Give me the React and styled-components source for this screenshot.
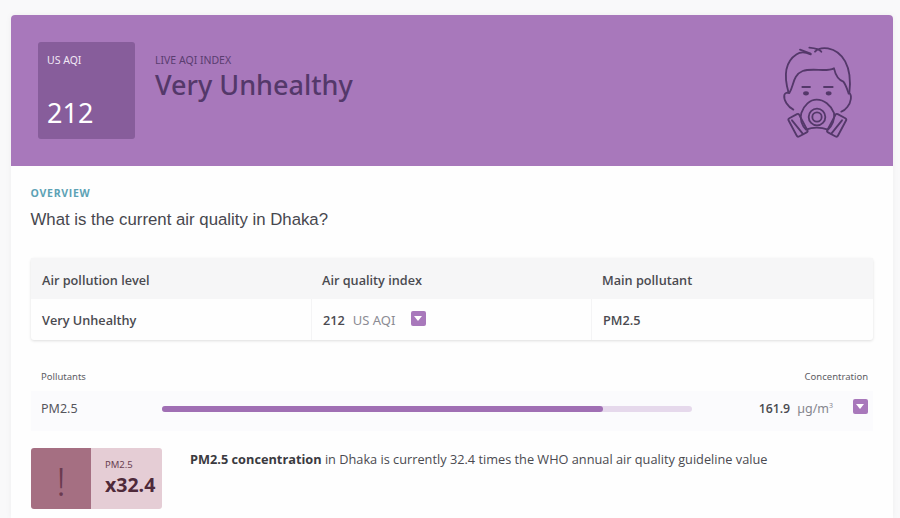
import React from "react";
import styled, { createGlobalStyle } from "styled-components";

const GlobalStyle = createGlobalStyle`
  html, body {
    margin: 0;
    background: #f9f9fa;
  }
  body {
    font-family: "Open Sans", "Noto Sans", sans-serif;
    color: #3f3f46;
  }
`;

const columns = [
  { title: "Air pollution level" },
  { title: "Air quality index" },
  { title: "Main pollutant" },
];

const MaskIcon = () => (
  <svg width="110" height="120" viewBox="0 0 330 360" fill="none" stroke="#54386a" strokeWidth="5.5" strokeLinecap="round" strokeLinejoin="round">
    <path d="M100 236C84 228 70 208 73 192C75 186 80 184 86 186C70 132 76 92 110 70C118 64 134 62 152 70" />
    <path d="M120 56L152 68M148 50C168 52 180 56 184 62M165 62C174 52 190 50 204 52C246 60 278 104 268 186C276 192 274 214 262 228C256 236 250 240 244 242" />
    <path d="M88 186C102 164 98 132 128 120C156 110 200 124 222 112C226 130 234 146 250 152C258 162 262 176 266 188" />
    <path d="M127 168H150M192 168H218" />
    <ellipse cx="138" cy="187" rx="6" ry="3.5" fill="#54386a" />
    <ellipse cx="206" cy="187" rx="6" ry="3.5" fill="#54386a" />
    <path d="M124 246C132 222 150 206 170 206C192 206 212 222 222 246C226 264 216 284 204 296C182 288 158 288 138 296C126 284 118 264 124 246Z" />
    <circle cx="171" cy="258" r="25" />
    <circle cx="171" cy="258" r="14" />
    <rect x="96" y="252" width="36" height="62" rx="5" transform="rotate(-28 114 283)" />
    <rect x="212" y="252" width="36" height="62" rx="5" transform="rotate(28 230 283)" />
    <path d="M96 268L128 308M246 268L214 308" />
  </svg>
);

const App = () => {
  return (
    <>
      <GlobalStyle />
      <Card>
        <Header>
          <ScoreTile>
            <ScoreLabel>US AQI</ScoreLabel>
            <ScoreValue>212</ScoreValue>
          </ScoreTile>
          <Status>
            <StatusLabel>LIVE AQI INDEX</StatusLabel>
            <StatusTitle>Very Unhealthy</StatusTitle>
          </Status>
          <MaskIcon />
        </Header>
        <Content>
          <Eyebrow>OVERVIEW</Eyebrow>
          <Question>What is the current air quality in Dhaka?</Question>
          <Table>
            {columns.map((c) => (
              <HeadCell key={c.title}>{c.title}</HeadCell>
            ))}
            <Cell>Very Unhealthy</Cell>
            <Cell>
              212 <Unit>US AQI</Unit>
              <DropButton />
            </Cell>
            <Cell>PM2.5</Cell>
          </Table>
          <PollutantHead>
            <span>Pollutants</span>
            <span>Concentration</span>
          </PollutantHead>
          <PollutantRow>
            <PollutantName>PM2.5</PollutantName>
            <Track>
              <Fill style={{ width: "83.2%" }} />
            </Track>
            <Amount>
              161.9
              <AmountUnit>
                µg/m<sup>3</sup>
              </AmountUnit>
            </Amount>
            <RowButton />
          </PollutantRow>
          <Advice>
            <Badge>
              <BadgeIcon>!</BadgeIcon>
              <BadgeBody>
                <BadgeLabel>PM2.5</BadgeLabel>
                <BadgeValue>x32.4</BadgeValue>
              </BadgeBody>
            </Badge>
            <AdviceText>
              <strong>PM2.5 concentration</strong> in Dhaka is currently 32.4 times the WHO annual air quality guideline value
            </AdviceText>
          </Advice>
        </Content>
      </Card>
    </>
  );
};

export default App;

const Card = styled.div`
  margin: 15px 7px 0 11px;
  height: 503px;
  overflow: hidden;
  background: #fefefe;
  border-radius: 4px 4px 0 0;
  box-shadow: 0 0 6px rgba(0, 0, 0, 0.05);
`;

const Header = styled.header`
  display: flex;
  align-items: center;
  height: 151px;
  padding: 0 23px 0 27px;
  box-sizing: border-box;
  background: #a878bb;
`;

const ScoreTile = styled.div`
  display: flex;
  flex-direction: column;
  justify-content: space-between;
  width: 97px;
  height: 97px;
  padding: 11px 9px 8px;
  box-sizing: border-box;
  background: #875d9b;
  border-radius: 3px;
  color: #fff;
`;

const ScoreLabel = styled.div`
  font-family: "Noto Sans", sans-serif;
  font-size: 10.5px;
  line-height: 14px;
  color: #f2e8f6;
`;

const ScoreValue = styled.div`
  font-family: "Noto Sans", sans-serif;
  font-size: 27px;
  line-height: 36px;
`;

const Status = styled.div`
  flex: 1;
  align-self: flex-start;
  padding: 38px 0 0 20px;
`;

const StatusLabel = styled.div`
  font-family: "Noto Sans", sans-serif;
  font-size: 10.5px;
  line-height: 14px;
  color: #5a3d70;
`;

const StatusTitle = styled.div`
  font-family: "Noto Sans", sans-serif;
  font-size: 27px;
  font-weight: 500;
  line-height: 36px;
  color: #54386a;
`;

const Content = styled.div`
  padding: 20px 20px 0;
`;

const Eyebrow = styled.div`
  margin-left: -0.5px;
  font-size: 10.5px;
  font-weight: 700;
  line-height: 14px;
  letter-spacing: 0.7px;
  color: #5da2b5;
`;

const Question = styled.h2`
  margin: 9px 0 0 -0.5px;
  font-family: "Liberation Sans", sans-serif;
  font-size: 16.8px;
  font-weight: 400;
  line-height: 22px;
  color: #47474e;
`;

const Table = styled.div`
  display: grid;
  grid-template-columns: 280px 280px 1fr;
  margin-top: 27px;
  border-radius: 3px;
  box-shadow: 0 1px 3px rgba(0, 0, 0, 0.13);
  font-size: 12.7px;
`;

const HeadCell = styled.div`
  display: flex;
  align-items: center;
  box-sizing: border-box;
  height: 41px;
  padding: 2px 0 0 11px;
  background: #f6f6f7;
  font-weight: 600;
  color: #4a4a50;
`;

const Cell = styled.div`
  display: flex;
  align-items: center;
  box-sizing: border-box;
  height: 41px;
  padding-left: 11px;
  font-weight: 600;
  color: #4a4a50;
  & + & {
    border-left: 1px solid #f4f4f5;
  }
`;

const Unit = styled.span`
  margin: 0 16px 0 8px;
  font-family: "Noto Sans", sans-serif;
  font-size: 13px;
  font-weight: 400;
  color: #8b8b93;
`;

const DropButton = styled.span`
  position: relative;
  flex: none;
  display: block;
  width: 15px;
  height: 15px;
  margin-top: -2px;
  background: #a878bb;
  border-radius: 2px;
  &::after {
    content: "";
    position: absolute;
    left: 3px;
    top: 5px;
    border-style: solid;
    border-width: 5px 4.5px 0;
    border-color: #fff transparent transparent;
  }
`;

const RowButton = styled(DropButton)`
  margin-top: -4px;
`;

const PollutantHead = styled.div`
  display: flex;
  justify-content: space-between;
  margin-top: 30px;
  padding: 0 5px 0 10px;
  font-family: "Noto Sans", sans-serif;
  font-size: 9.5px;
  line-height: 14px;
  color: #5d5d64;
`;

const PollutantRow = styled.div`
  display: flex;
  align-items: center;
  box-sizing: border-box;
  height: 40px;
  margin-top: 7px;
  padding: 0 5px 6px 10px;
  background: #fbfbfd;
`;

const PollutantName = styled.div`
  width: 121px;
  font-family: "Noto Sans", sans-serif;
  font-size: 12.5px;
  color: #55555c;
`;

const Track = styled.div`
  width: 530px;
  height: 6px;
  margin-top: 2px;
  background: #e6d9ec;
  border-radius: 3px;
`;

const Fill = styled.div`
  height: 100%;
  background: #a06fb4;
  border-radius: 3px;
`;

const Amount = styled.div`
  flex: 1;
  display: flex;
  justify-content: flex-end;
  align-items: baseline;
  margin-right: 20px;
  font-size: 12.3px;
  font-weight: 600;
  color: #4a4a50;
`;

const AmountUnit = styled.span`
  margin-left: 7px;
  font-family: "Noto Sans", sans-serif;
  font-size: 12.5px;
  font-weight: 400;
  color: #85858d;
  & > sup {
    font-size: 7px;
    line-height: 0;
  }
`;

const Advice = styled.div`
  display: flex;
  gap: 28px;
  margin-top: 17px;
`;

const Badge = styled.div`
  display: flex;
  flex: none;
  width: 131px;
  height: 61px;
  overflow: hidden;
  border-radius: 3px;
`;

const BadgeIcon = styled.div`
  display: flex;
  align-items: center;
  justify-content: center;
  box-sizing: border-box;
  width: 60px;
  padding-top: 3px;
  background: #a56f82;
  font-family: "Noto Sans", sans-serif;
  font-size: 39px;
  font-weight: 300;
  color: #6b3a50;
`;

const BadgeBody = styled.div`
  flex: 1;
  padding: 10px 0 0 14px;
  background: #e5cdd5;
  color: #4f2a3a;
`;

const BadgeLabel = styled.div`
  font-family: "Noto Sans", sans-serif;
  font-size: 9.5px;
  line-height: 14px;
  color: #6a4152;
`;

const BadgeValue = styled.div`
  font-size: 19.5px;
  font-weight: 700;
  line-height: 26px;
`;

const AdviceText = styled.p`
  margin: 2px 0 0;
  font-size: 12.75px;
  line-height: 18px;
  color: #4a4a50;
  & > strong {
    font-weight: 700;
    color: #3a3a40;
  }
`;
